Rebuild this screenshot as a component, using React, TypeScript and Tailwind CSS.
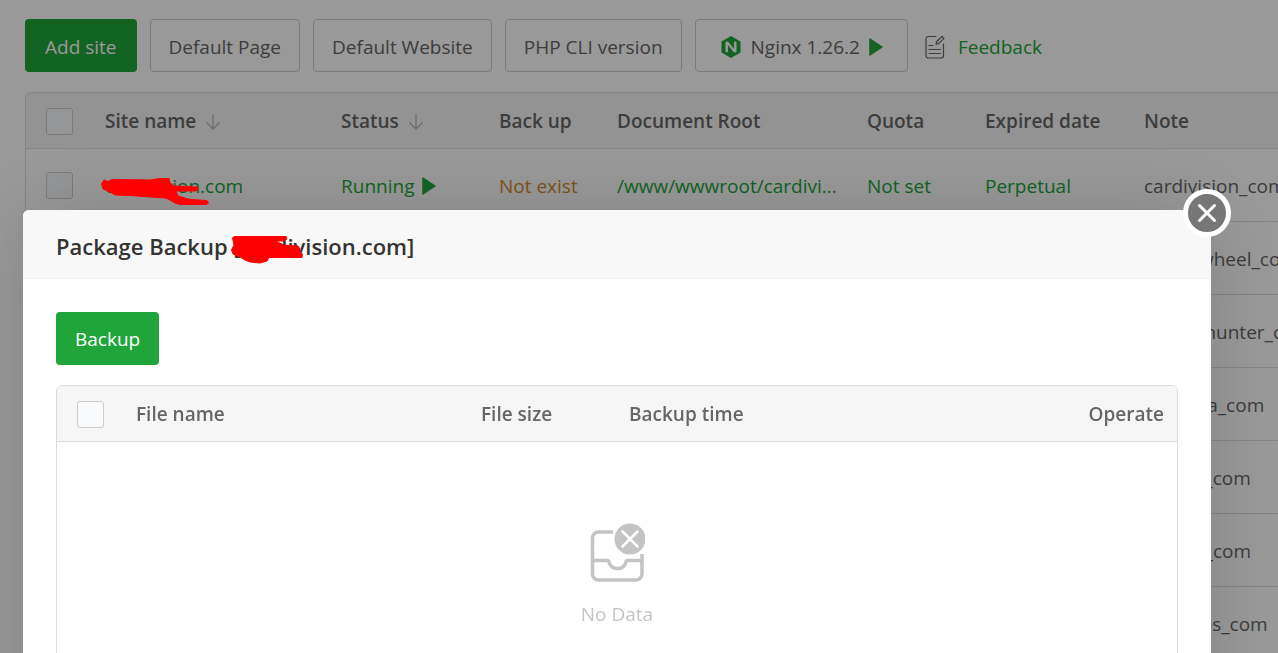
import type { ReactNode } from "react";
import { SiNginx } from "react-icons/si";

interface Site {
  name: string;
  root: string;
  note: string;
}

const sites: Site[] = [
  { name: "cardivision.com", root: "/www/wwwroot/cardivi...", note: "cardivision_com" },
  { name: "motorwheel.com", root: "/www/wwwroot/motorwh...", note: "motorwheel_com" },
  { name: "homeshunter.com", root: "/www/wwwroot/homeshu...", note: "homeshunter_com" },
  { name: "carmota.com", root: "/www/wwwroot/carmota...", note: "carmota_com" },
  { name: "carfest.com", root: "/www/wwwroot/carfest...", note: "carfest_com" },
  { name: "cartest.com", root: "/www/wwwroot/cartest...", note: "cartest_com" },
  { name: "cartunes.com", root: "/www/wwwroot/cartunes...", note: "cartunes_com" },
];

function Checkbox({ label }: { label: string }) {
  return (
    <input
      type="checkbox"
      aria-label={label}
      className="block size-[27px] appearance-none rounded-[3px] border border-[#cdcdcd] bg-[#f9fafc]"
    />
  );
}

function ToolButton({ children, className = "px-[18px]" }: { children: ReactNode; className?: string }) {
  return (
    <button type="button" className={`flex h-[53px] items-center rounded border border-[#ccc] bg-white pt-0.5 ${className}`}>
      {children}
    </button>
  );
}

function SortArrow() {
  return (
    <svg width="16" height="16" viewBox="0 0 16 16" fill="none" stroke="#b4b4b4" strokeWidth="1.3" className="ml-[9px] inline-block align-[-2px]">
      <path d="M8 0.5V15M1.5 8.5L8 15L14.5 8.5" />
    </svg>
  );
}

function PlayIcon() {
  return (
    <svg width="14" height="18" viewBox="0 0 14 18" fill="#20a53a" stroke="#20a53a" strokeWidth="1.5" strokeLinejoin="round">
      <path d="M1 1L13 9L1 17Z" />
    </svg>
  );
}

function FeedbackIcon() {
  return (
    <svg width="20" height="24" viewBox="0 0 20 24" fill="none" stroke="#666" strokeWidth="1.2" strokeLinecap="round" strokeLinejoin="round">
      <path d="M11 1.5H3.5A2.500 2.500 0 0 0 1 4v16.500A2.500 2.500 0 0 0 3.500 23H16a2.500 2.500 0 0 0 2.500-2.500V9" />
      <path d="M11 9.200L11.700 6.500L17 1.500L19 3.400L13.700 8.600Z" />
      <path d="M4 10.500H8M4 14.500H15.500M4 18.500H15.500" />
    </svg>
  );
}

function EmptyIcon() {
  return (
    <svg width="56" height="60" viewBox="0 0 56 60" fill="none" stroke="#c4c4c4" strokeWidth="3.5">
      <path d="M24 9H9.500A6 6 0 0 0 3.500 15V51A6 6 0 0 0 9.500 57H47A6 6 0 0 0 53 51V31" />
      <path d="M3.500 37.500H18.500C20 37.500 20 39 20.500 40.500C22 44 25 45.500 28.500 45.500C32 45.500 35 44 36.500 40.500C37 39 37 37.500 38.500 37.500H53" />
      <circle cx="41" cy="16" r="15.500" fill="#c4c4c4" stroke="none" />
      <path d="M33.500 8.500L48.500 23.500M48.500 8.500L33.500 23.500" stroke="#fff" strokeWidth="2.500" strokeLinecap="round" />
    </svg>
  );
}

function SiteTable() {
  return (
    <div className="mt-5 overflow-hidden rounded-tl-md border border-r-0 border-[#dcdcdc]">
      <table className="w-full min-w-[1400px] table-fixed text-left">
        <colgroup>
          <col className="w-[79px]" />
          <col className="w-[236px]" />
          <col className="w-[158px]" />
          <col className="w-[118px]" />
          <col className="w-[250px]" />
          <col className="w-[118px]" />
          <col className="w-[159px]" />
          <col />
        </colgroup>
        <thead>
          <tr className="h-[55px] border-b border-[#dcdcdc] bg-[#f6f6f6] [&>th]:pt-0.5 [&>th]:font-semibold">
            <th className="pl-5"><Checkbox label="Select all sites" /></th>
            <th>Site name<SortArrow /></th>
            <th>Status<SortArrow /></th>
            <th>Back up</th>
            <th>Document Root</th>
            <th>Quota</th>
            <th>Expired date</th>
            <th>Note</th>
          </tr>
        </thead>
        <tbody>
          {sites.map((site, index) => (
            <tr key={site.name} className="h-[73px] border-b border-[#dcdcdc] text-[#20a53a] [&>td]:pt-0.5">
              <td className="pl-5"><Checkbox label={`Select ${site.name}`} /></td>
              <td>
                <span className="relative">
                  <a href="#site">{site.name}</a>
                  {index === 0 && (
                    <svg width="110" height="30" viewBox="100 177 110 30" fill="#f00" stroke="#f00" strokeWidth="1" strokeLinejoin="round" className="absolute top-1 -left-[5px] z-20 max-w-none">
                      <path d="M101.500 184L104 180L108 181.500L112 179.500L150 180L160 178.500H169L170 183L174 186L197 187L198.500 189L196 191H176L178 196L190 199.500L207 200.500L208.500 203L206 204.500H180L175 203L168 199L165 198L150 197L130 195.500L115 195L110 192L103 189Z" />
                    </svg>
                  )}
                </span>
              </td>
              <td>
                <button type="button" className="flex items-center gap-2">Running <PlayIcon /></button>
              </td>
              <td><a href="#backup" className="text-[#d48c2c]">Not exist</a></td>
              <td><a href="#root">{site.root}</a></td>
              <td><a href="#quota">Not set</a></td>
              <td><a href="#expire">Perpetual</a></td>
              <td className="text-[#666]">{site.note}</td>
            </tr>
          ))}
        </tbody>
      </table>
    </div>
  );
}

function BackupDialog() {
  return (
    <div className="fixed inset-0 z-10 overflow-hidden bg-black/40 pt-[210px] pr-[67px] pl-[23px]">
      <div role="dialog" aria-labelledby="dialog-title" className="relative rounded-tl-md bg-white shadow-[0_0_80px_rgba(0,0,0,0.15)]">
        <header className="flex h-[69px] items-center rounded-tl-md border-b border-[#eee] bg-[#f8f8f8] px-[33px] pt-1">
          <h2 id="dialog-title" className="relative text-[22px] font-semibold text-[#333]">
            Package Backup [cardivision.com]
            <svg width="74" height="30" viewBox="230 235 74 30" fill="#f00" stroke="#f00" strokeWidth="1" strokeLinejoin="round" className="absolute top-[3px] left-[174px]">
              <path d="M232.500 238L234 236.500H286L287 239L284 241H276L283 245L298 246L300 249L299 252L302.500 254L302 257.500H269L267 261L260 263L250 262L245 260L240 257L233 254L231.500 250L234 245Z" />
            </svg>
          </h2>
        </header>
        <button type="button" aria-label="Close" className="absolute -top-[21px] -right-5 flex size-12 items-center justify-center rounded-full border-5 border-white bg-[#777]">
          <svg width="20" height="20" viewBox="0 0 20 20" fill="none" stroke="#fff" strokeWidth="3" strokeLinecap="round">
            <path d="M2.500 2.500L17.500 17.500M17.500 2.500L2.500 17.500" />
          </svg>
        </button>
        <div className="p-[33px]">
          <button type="button" className="h-[53px] rounded bg-[#20a53a] px-[19px] text-white">Backup</button>
          <div className="mt-5 overflow-hidden rounded-md border border-[#dcdcdc]">
            <table className="w-full table-fixed text-left">
              <colgroup>
                <col className="w-[79px]" />
                <col />
                <col className="w-[148px]" />
                <col className="w-[300px]" />
                <col className="w-[248px]" />
              </colgroup>
              <thead>
                <tr className="h-[55px] border-b border-[#dcdcdc] bg-[#f6f6f6] [&>th]:pt-0.5 [&>th]:font-semibold">
                  <th className="pl-5"><Checkbox label="Select all backups" /></th>
                  <th>File name</th>
                  <th>File size</th>
                  <th>Backup time</th>
                  <th className="pr-[13px] text-right">Operate</th>
                </tr>
              </thead>
              <tbody>
                <tr>
                  <td colSpan={5} className="pt-[81px] pb-28">
                    <div className="flex flex-col items-center gap-[17px] text-[#c4c4c4]">
                      <EmptyIcon />
                      No Data
                    </div>
                  </td>
                </tr>
              </tbody>
            </table>
          </div>
        </div>
      </div>
    </div>
  );
}

export default function App() {
  return (
    <div className="h-screen overflow-hidden bg-white font-['Open_Sans','Noto_Sans',sans-serif] text-[19px] leading-7 text-[#666]">
      <main className="pt-[19px] pl-[25px]">
        <div className="flex items-center gap-[13px]">
          <button type="button" className="h-[53px] rounded bg-[#20a53a] px-5 pt-0.5 text-white">Add site</button>
          <ToolButton>Default Page</ToolButton>
          <ToolButton>Default Website</ToolButton>
          <ToolButton>PHP CLI version</ToolButton>
          <ToolButton className="gap-[9px] px-6">
            <SiNginx size={22} color="#20a53a" />
            Nginx 1.26.2
            <PlayIcon />
          </ToolButton>
          <a href="#feedback" className="ml-1 flex items-center gap-[13px] pt-0.5 text-[#20a53a]">
            <FeedbackIcon />
            Feedback
          </a>
        </div>
        <SiteTable />
      </main>
      <BackupDialog />
    </div>
  );
}
